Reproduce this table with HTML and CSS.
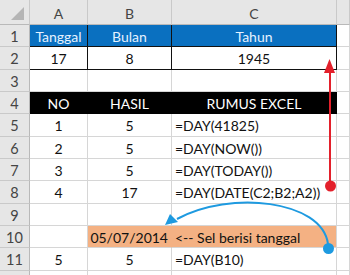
FILE: index.html
```html
<!DOCTYPE html>
<html>
<head>
<meta charset="utf-8">
<link rel="stylesheet" href="styles.css">
</head>
<body>
<div class="sheet">
  <div class="grid">
    <div class="ch corner"><svg class="tri" width="14" height="13" viewBox="0 0 14 13"><polygon points="13,0 13,13 0,13" fill="#b5b5b5"/></svg></div>
    <div class="ch">A</div><div class="ch">B</div><div class="ch">C</div><div class="ch last"></div>

    <div class="rh">1</div><div class="c blue bk">Tanggal</div><div class="c blue bk">Bulan</div><div class="c blue bk">Tahun</div><div class="c"></div>
    <div class="rh">2</div><div class="c bk">17</div><div class="c bk">8</div><div class="c bk">1945</div><div class="c"></div>
    <div class="rh">3</div><div class="c"></div><div class="c"></div><div class="c"></div><div class="c"></div>
    <div class="rh">4</div><div class="c dark">NO</div><div class="c dark">HASIL</div><div class="c dark">RUMUS EXCEL</div><div class="c"></div>
    <div class="rh">5</div><div class="c">1</div><div class="c">5</div><div class="c left">=DAY(41825)</div><div class="c"></div>
    <div class="rh">6</div><div class="c">2</div><div class="c">5</div><div class="c left">=DAY(NOW())</div><div class="c"></div>
    <div class="rh">7</div><div class="c">3</div><div class="c">5</div><div class="c left">=DAY(TODAY())</div><div class="c"></div>
    <div class="rh">8</div><div class="c">4</div><div class="c">17</div><div class="c left">=DAY(DATE(C2;B2;A2))</div><div class="c"></div>
    <div class="rh">9</div><div class="c"></div><div class="c"></div><div class="c"></div><div class="c"></div>
    <div class="rh">10</div><div class="c"></div><div class="c orange right joined">05/07/2014</div><div class="c orange left">&lt;-- Sel berisi tanggal</div><div class="c"></div>
    <div class="rh">11</div><div class="c">5</div><div class="c">5</div><div class="c left">=DAY(B10)</div><div class="c"></div>
    <div class="rh">12</div><div class="c"></div><div class="c"></div><div class="c"></div><div class="c"></div>
  </div>
  <svg class="overlay" width="350" height="275" viewBox="0 0 350 275">
    <line x1="330" y1="70" x2="330" y2="186" stroke="#e3202b" stroke-width="2"/>
    <polygon points="329.5,59 324,73 335,73" fill="#e3202b"/>
    <circle cx="330.5" cy="186" r="5.5" fill="#e3202b"/>
    <path d="M328 244 C322 200, 230 190, 177 219" fill="none" stroke="#1e9ae0" stroke-width="2"/>
    <polygon points="165,225 170,214 178,222" fill="#1e9ae0"/>
    <circle cx="328.5" cy="248.5" r="5.5" fill="#1e9ae0"/>
  </svg>
</div>
</body>
</html>
```
FILE: styles.css
```css
html, body {
  margin: 0;
  padding: 0;
  background: #ffffff;
}
.sheet {
  position: relative;
  width: 350px;
  height: 275px;
  overflow: hidden;
  font-family: Lato, "Liberation Sans", sans-serif;
  font-size: 14px;
  color: #111;
}
.grid {
  display: grid;
  grid-template-columns: 30px 58px 84px 165px 1fr;
  grid-template-rows: 25px 22px 23px 22px 22px 23px 22px 22px 23px 22px 22px 23px 22px;
}
.grid > div {
  box-sizing: border-box;
  border-right: 1px solid #d6d6d6;
  border-bottom: 1px solid #d6d6d6;
  display: flex;
  align-items: center;
  justify-content: center;
  white-space: nowrap;
  overflow: visible;
  padding-top: 1px;
}
.ch {
  background: #e6e6e6;
  color: #444;
  border-right-color: #c9c9c9 !important;
  border-bottom-color: #b9b9b9 !important;
  padding-top: 2px !important;
}
.corner {
  position: relative;
}
.tri {
  position: absolute;
  right: 4px;
  bottom: 4px;
}
.rh {
  background: #e6e6e6;
  color: #444;
  font-size: 14.5px;
  border-right-color: #b9b9b9 !important;
  border-bottom-color: #c9c9c9 !important;
}
.blue {
  background: #0a70c0;
  color: #e6f2ff;
}
.bk {
  border-right-color: #111 !important;
  border-bottom-color: #111 !important;
}
.dark {
  background: #000;
  color: #fff;
  border-color: #000 !important;
}
.left {
  justify-content: flex-start !important;
  padding-left: 3px;
}
.right {
  justify-content: flex-end !important;
  padding-right: 3px;
}
.orange {
  background: #f4b183;
}
.joined {
  border-right-color: #f4b183 !important;
}
.overlay {
  position: absolute;
  left: 0;
  top: 0;
}
```
